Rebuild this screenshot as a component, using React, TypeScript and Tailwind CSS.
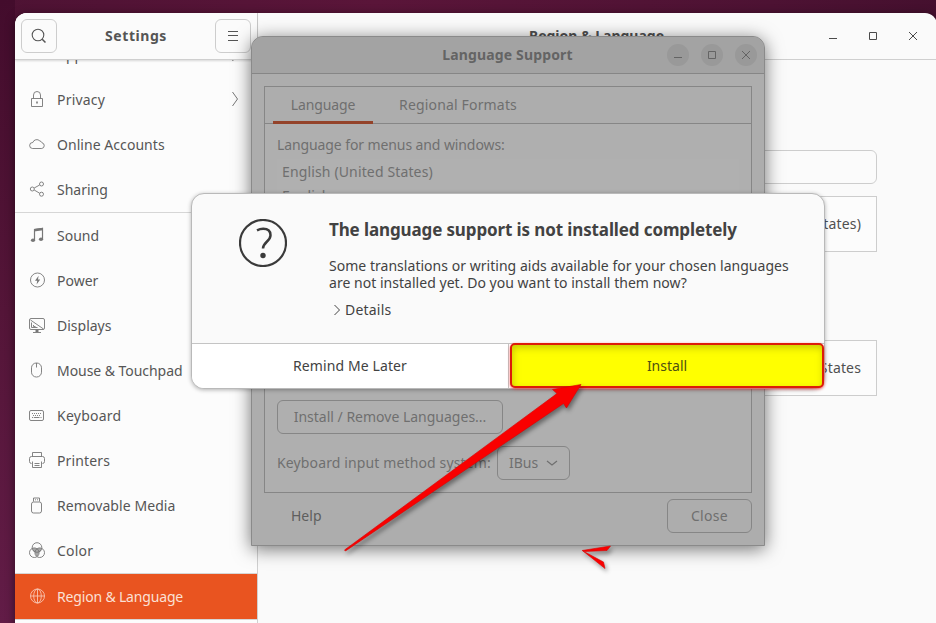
import React from 'react';

type IconName =
  | 'apps'
  | 'lock'
  | 'cloud'
  | 'share'
  | 'music'
  | 'power'
  | 'display'
  | 'mouse'
  | 'keyboard'
  | 'printer'
  | 'usb'
  | 'color'
  | 'globe';

interface NavItem {
  label: string;
  icon: IconName;
  tracking?: string;
  arrow?: boolean;
  active?: boolean;
  divider?: boolean;
}

const navItems: NavItem[] = [
  { label: 'Applications', icon: 'apps', arrow: true },
  { label: 'Privacy', icon: 'lock', tracking: 'tracking-[0.2px]', arrow: true },
  { label: 'Online Accounts', icon: 'cloud', tracking: 'tracking-[0.05px]' },
  { label: 'Sharing', icon: 'share', divider: true },
  { label: 'Sound', icon: 'music' },
  { label: 'Power', icon: 'power' },
  { label: 'Displays', icon: 'display' },
  { label: 'Mouse & Touchpad', icon: 'mouse', tracking: 'tracking-[-0.05px]' },
  { label: 'Keyboard', icon: 'keyboard', tracking: 'tracking-[0.25px]' },
  { label: 'Printers', icon: 'printer', tracking: 'tracking-[0.15px]' },
  { label: 'Removable Media', icon: 'usb', tracking: 'tracking-[0.08px]' },
  { label: 'Color', icon: 'color', tracking: 'tracking-[0.2px]', divider: true },
  { label: 'Region & Language', icon: 'globe', tracking: 'tracking-[-0.17px]', active: true, divider: true },
];

const iconShapes: Record<IconName, React.ReactNode> = {
  apps: <path d="M2 2h3v3H2zM8 2h3v3H8zM2 8h3v3H2zM8 8h3v3H8z" />,
  lock: (
    <>
      <path d="M2.5 7.5h11v8h-11zM4.5 7.5V4a3.5 3.5 0 0 1 7 0v3.5" />
      <path d="M7.2 10.5h1.6v2H7.2z" fill="currentColor" stroke="none" />
    </>
  ),
  cloud: <path d="M3.5 12.5h9.2a2.9 2.9 0 0 0 .3-5.7A3.2 3.2 0 0 0 10.8 4.9 4.2 4.2 0 0 0 3.8 6.5 3 3 0 0 0 3.5 12.5z" />,
  share: (
    <>
      <circle cx="3.3" cy="8" r="2" />
      <circle cx="12.5" cy="3" r="2" />
      <circle cx="12.5" cy="13.2" r="2" />
      <path d="M5.2 7l5.4-3M5.2 9l5.4 3.2" />
    </>
  ),
  music: (
    <>
      <path d="M5.5 13V2.5l8-1v11" strokeWidth="1.2" />
      <path d="M5 2l9-1.2v2.4L5 4.4z" fill="currentColor" stroke="none" />
      <ellipse cx="4" cy="13.3" rx="2.1" ry="1.8" fill="currentColor" stroke="none" />
      <ellipse cx="12" cy="12.3" rx="2.1" ry="1.8" fill="currentColor" stroke="none" />
    </>
  ),
  power: (
    <>
      <circle cx="8.5" cy="8" r="7" />
      <path d="M9.6 3.8L6 8.8h2.2l-.6 3.6 3.6-5H9z" fill="currentColor" stroke="none" />
    </>
  ),
  display: (
    <>
      <rect x=".5" y="1.5" width="15" height="11" rx="1.5" />
      <path d="M1.5 3l13 9M2.5 5.5v5h6M4.5 8v1.5H6.5M4 15.5h8" />
      <path d="M6.5 12.5h3v2.5h-3z" fill="currentColor" stroke="none" />
    </>
  ),
  mouse: (
    <>
      <rect x="2.5" y="1" width="10" height="14" rx="4.8" />
      <path d="M7.5 1v4.5" />
    </>
  ),
  keyboard: (
    <>
      <rect x=".5" y="3.5" width="14" height="10" rx="1.5" />
      <path d="M3 6.5h10M4 8.5h8" strokeDasharray="1 1" />
      <path d="M3 10.5h1.2M5 10.5h5.5M11.5 10.5H12.5" />
    </>
  ),
  printer: (
    <>
      <path d="M3.5 4.5v-4h9v4M2.5 11.5a2 2 0 0 1-2-2v-3a2 2 0 0 1 2-2h11a2 2 0 0 1 2 2v3a2 2 0 0 1-2 2" />
      <path d="M3.5 9.5v6h9v-6M5.5 11.5h5M5.5 13.5h5" />
    </>
  ),
  usb: (
    <>
      <rect x="2.5" y="5" width="10" height="11" rx="2" />
      <path d="M4.5 4.5v-3.5h6v3.5M6 2.8h1M8 2.8h1" />
    </>
  ),
  color: (
    <>
      <circle cx="8" cy="5.5" r="4.8" />
      <circle cx="5.3" cy="10.7" r="4.8" />
      <circle cx="10.7" cy="10.7" r="4.8" />
      <path
        d="M3.4 6.4q2-.8 4.600.4 2.600-1.200 4.600-.4.200 3-2.600 3.900-.2 2.500-2 4.300-1.800-1.800-2-4.300-2.800-.9-2.600-3.900z"
        fill="currentColor"
        fillOpacity="0.65"
        stroke="none"
      />
    </>
  ),
  globe: (
    <>
      <circle cx="8.5" cy="8" r="7" />
      <ellipse cx="8.5" cy="8" rx="3.8" ry="7" />
      <path d="M8.5 1v14M1.5 8h14" />
    </>
  ),
};

const Icon: React.FC<{ name: IconName }> = ({ name }) => (
  <svg viewBox="0 0 16 16" className="mb-0.5 w-4 h-4 shrink-0 overflow-visible opacity-80" fill="none" stroke="currentColor" strokeWidth="0.9">
    {iconShapes[name]}
  </svg>
);

const NavRow: React.FC<{ item: NavItem }> = ({ item }) => (
  <>
    <div
      className={`h-[45px] shrink-0 flex items-center pl-3.5 pr-[19px] ${
        item.active ? 'bg-[#e95420] text-[#fbe0d5]' : 'text-[#565656]'
      }`}
    >
      <Icon name={item.icon} />
      <span className={`ml-3 leading-5 ${item.tracking ?? ''}`}>{item.label}</span>
      {item.arrow && (
        <svg viewBox="0 0 6 16" className="ml-auto mb-0.5 w-1.5 h-4" fill="none" stroke="#777" strokeWidth="1">
          <path d="M.5 1l5 7-5 7" />
        </svg>
      )}
    </div>
    {item.divider && <div className="h-px shrink-0 bg-[#d6d6d6]" />}
  </>
);

const WindowControls: React.FC = () => (
  <>
    <svg viewBox="0 0 12 12" className="w-3 h-3" fill="none" stroke="currentColor">
      <path d="M2 8.5h8" />
    </svg>
    <svg viewBox="0 0 12 12" className="w-3 h-3" fill="none" stroke="currentColor">
      <path d="M2.5 2.5h7v7h-7z" />
    </svg>
    <svg viewBox="0 0 12 12" className="w-3 h-3" fill="none" stroke="currentColor">
      <path d="M2 2l8 8M10 2l-8 8" />
    </svg>
  </>
);

const SettingsWindow: React.FC = () => (
  <div className="absolute left-[15px] top-[13px] w-[922px] h-[620px] flex rounded-t-xl overflow-hidden bg-[#fafafa] shadow-[0_2px_10px_rgba(0,0,0,0.5)]">
    <aside className="w-[243px] shrink-0 flex flex-col bg-[#fcfcfc] border-r border-[#d0d0d0]">
      <header className="relative h-[47px] shrink-0 flex items-center justify-between pl-1.5 pr-1.5 border-b border-[#cfcfcf] shadow-[0_1px_2px_rgba(0,0,0,0.15)] bg-[#fbfbfb] text-[#555]">
        <button className="w-9 h-[34px] rounded-md border border-[#cdcdcd] flex items-center justify-center">
          <svg viewBox="0 0 16 16" className="w-4 h-4" fill="none" stroke="currentColor" strokeWidth="1.1">
            <circle cx="7" cy="7" r="5.8" />
            <path d="M11.2 11.2l3.3 3.3" strokeWidth="1.5" />
          </svg>
        </button>
        <h1 className="pb-0.5 font-bold tracking-[0.55px]">Settings</h1>
        <button className="w-9 h-[34px] rounded-md border border-[#cdcdcd] flex items-center justify-center">
          <svg viewBox="0 0 16 16" className="w-4 h-4" fill="none" stroke="currentColor">
            <path d="M3 3.5h10M3 7.5h10M3 12.5h10" />
          </svg>
        </button>
      </header>
      <nav className="flex-1 overflow-hidden flex flex-col">
        <div className="-mt-7 flex flex-col">
          {navItems.map(item => (
            <NavRow key={item.label} item={item} />
          ))}
        </div>
      </nav>
    </aside>

    <main className="flex-1 flex flex-col text-[#505050]">
      <header className="h-[47px] shrink-0 grid grid-cols-[1fr_auto_1fr] items-center border-b border-[#cfcfcf]">
        <span />
        <h2 className="pb-0.5 pr-0.5 font-bold">Region &amp; Language</h2>
        <div className="flex justify-end gap-7 pr-[18px] text-[#4a4a4a]">
          <WindowControls />
        </div>
      </header>
      <div className="flex flex-col pl-[60px] pr-[60px] pt-[90px]">
        <div className="h-[34px] rounded-md border border-[#cdcdcd] bg-[#fbfbfb]" />
        <div className="mt-3 h-14 border border-[#cdcdcd] bg-white/40 flex items-center justify-end px-[15px] pb-0.5">
          <span className="tracking-[0.15px]">English (United States)</span>
        </div>
        <div className="mt-[88px] h-14 border border-[#cdcdcd] bg-white/40 flex items-center justify-end px-[15px] pb-0.5">
          <span className="tracking-[0.15px]">United States</span>
        </div>
      </div>
    </main>
  </div>
);

const LanguageSupportWindow: React.FC = () => (
  <div className="absolute left-[251px] top-9 w-[514px] h-[510px] flex flex-col rounded-t-xl overflow-hidden bg-[#adadad] border border-[#8a8a8a] shadow-[0_3px_18px_rgba(0,0,0,0.55)] text-[#6f6f6f]">
    <header className="h-[37px] shrink-0 grid grid-cols-[1fr_auto_1fr] items-center bg-[#a3a3a3] border-b border-[#868686] text-[#646464]">
      <span />
      <h2 className="pb-0.5 pr-px font-bold tracking-[0.15px]">Language Support</h2>
      <div className="flex justify-end gap-3 pr-[7px]">
        <span className="w-[22px] h-[22px] rounded-full bg-[#999] flex items-center justify-center">
          <svg viewBox="0 0 12 12" className="w-3 h-3" stroke="currentColor">
            <path d="M2 8.5h8" />
          </svg>
        </span>
        <span className="w-[22px] h-[22px] rounded-full bg-[#999] flex items-center justify-center">
          <svg viewBox="0 0 12 12" className="w-3 h-3" fill="none" stroke="currentColor">
            <path d="M2.5 2.5h7v7h-7z" />
          </svg>
        </span>
        <span className="w-[22px] h-[22px] rounded-full bg-[#999] flex items-center justify-center">
          <svg viewBox="0 0 12 12" className="w-3 h-3" stroke="currentColor">
            <path d="M2 2l8 8M10 2l-8 8" />
          </svg>
        </span>
      </div>
    </header>

    <section className="mx-3 mt-3 h-[407px] shrink-0 border border-[#868686] bg-[#afafaf] flex flex-col">
      <div className="h-[37px] shrink-0 flex border-b border-[#868686] bg-[#adadad] pl-2">
        <div className="w-[100px] h-[37px] border-b-[3px] border-[#94432a] flex items-center justify-center tracking-[-0.15px]">
          Language
        </div>
        <div className="h-[37px] flex items-center pl-[26px] pb-[3px] tracking-[0.17px]">Regional Formats</div>
      </div>
      <div className="px-3 pt-[11px] flex flex-col flex-1">
        <p className="leading-5 tracking-[-0.1px]">Language for menus and windows:</p>
        <ul className="mt-1 h-[218px] bg-[#b0b0b0] pl-[5px] tracking-[0.14px]">
          <li className="h-6 flex items-center">English (United States)</li>
          <li className="h-6 flex items-center">English</li>
        </ul>
        <button className="mt-[23px] w-[226px] h-[34px] pb-0.5 rounded-md border border-[#868686] flex items-center justify-center">
          Install / Remove Languages...
        </button>
        <div className="mt-3 flex items-center gap-1.5">
          <span className="pb-0.5 w-[214px] whitespace-nowrap tracking-[0.13px]">Keyboard input method system:</span>
          <button className="w-[73px] h-[34px] rounded-md border border-[#868686] flex items-center justify-center gap-2">
            <span className="pb-0.5">IBus</span>
            <svg viewBox="0 0 12 8" className="w-3 h-2" fill="none" stroke="currentColor" strokeWidth="1.2">
              <path d="M1 2l5 4 5-4" />
            </svg>
          </button>
        </div>
      </div>
    </section>

    <footer className="flex justify-between items-center pl-[39px] pr-3 pt-1.5">
      <span className="pb-0.5 text-[#5e5e5e]">Help</span>
      <button className="w-[85px] h-[34px] pb-0.5 rounded-md border border-[#868686] flex items-center justify-center tracking-[0.3px]">
        Close
      </button>
    </footer>
  </div>
);

const InstallDialog: React.FC = () => (
  <div className="absolute left-[191px] top-[193px] w-[634px] h-[196px] flex flex-col rounded-[13px] border border-[#b9b9b9] bg-[#fafafa] shadow-[0_1px_4px_rgba(0,0,0,0.3)] text-[#424242]">
    <div className="h-[149px] shrink-0 flex pl-[47px] pt-[25px]">
      <svg viewBox="0 0 48 48" className="w-12 h-12 shrink-0" fill="none" stroke="#3a3a3a">
        <circle cx="24" cy="24" r="23" strokeWidth="2.2" />
        <path d="M18 11.300q3-1.500 6.200-1.500c4.600 0 7.300 2.500 7.300 6.400 0 6.200-7.500 6.900-7.500 13.300" strokeWidth="2.500" />
        <circle cx="24" cy="36.5" r="2.7" fill="#3a3a3a" stroke="none" />
      </svg>
      <div className="ml-[42px]">
        <h3 className="text-[17px] leading-[22px] font-bold tracking-[-0.12px] whitespace-nowrap">
          The language support is not installed completely
        </h3>
        <p className="mt-4 leading-[17px] tracking-[0.03px] whitespace-nowrap">
          Some translations or writing aids available for your chosen languages
          <br />
          are not installed yet. Do you want to install them now?
        </p>
        <div className="mt-[9px] ml-[5px] flex items-center gap-[5px] leading-5">
          <svg viewBox="0 0 6 12" className="w-1.5 h-3" fill="none" stroke="currentColor">
            <path d="M.5 1l5 5-5 5" />
          </svg>
          <span className="tracking-[0.2px]">Details</span>
        </div>
      </div>
    </div>
    <div className="flex-1 flex border-t border-[#c4c4c4] rounded-b-xl bg-white">
      <button className="w-[317px] pb-px border-r border-[#c4c4c4] tracking-[0.1px]">Remind Me Later</button>
      <button className="relative -mt-px ml-px w-[314px] pb-px rounded-[5px] border-2 border-[#dd1c08] bg-[#ffff00] text-[#4f4f12] shadow-[0_1px_3px_rgba(255,0,0,0.6),inset_1px_3px_7px_rgba(150,150,0,0.5)]">
        Install
      </button>
    </div>
  </div>
);

// Pointer arrow and the small stray marks below the window
const Annotations: React.FC = () => (
  <svg
    viewBox="0 0 936 623"
    className="absolute inset-0 w-full h-full pointer-events-none drop-shadow-[2px_3px_2px_rgba(0,0,0,0.4)]"
    fill="#f90000"
    stroke="#d80000"
    strokeWidth="0.6"
  >
    <path d="M344.5 550L557 393.5 552.5 389.5 581 384.5 566.5 408 563.5 403.5 345.5 551z" />
    <path d="M582 550.5L610.5 546 607 550.5 585 551.5z" />
    <path d="M583 551L603.5 562 605 568.5z" />
  </svg>
);

export default function App() {
  return (
    <div className="relative w-[936px] h-[623px] overflow-hidden bg-[radial-gradient(ellipse_at_40%_0%,#5a1539_0%,#4d1233_50%,#3a0d28_100%)] font-['Noto_Sans','Open_Sans',sans-serif] text-[14px]">
      <div className="w-[15px] h-full bg-linear-to-b from-[#430c2c] via-[#541538] to-[#621c47]" />
      <SettingsWindow />
      <LanguageSupportWindow />
      <InstallDialog />
      <Annotations />
    </div>
  );
}
